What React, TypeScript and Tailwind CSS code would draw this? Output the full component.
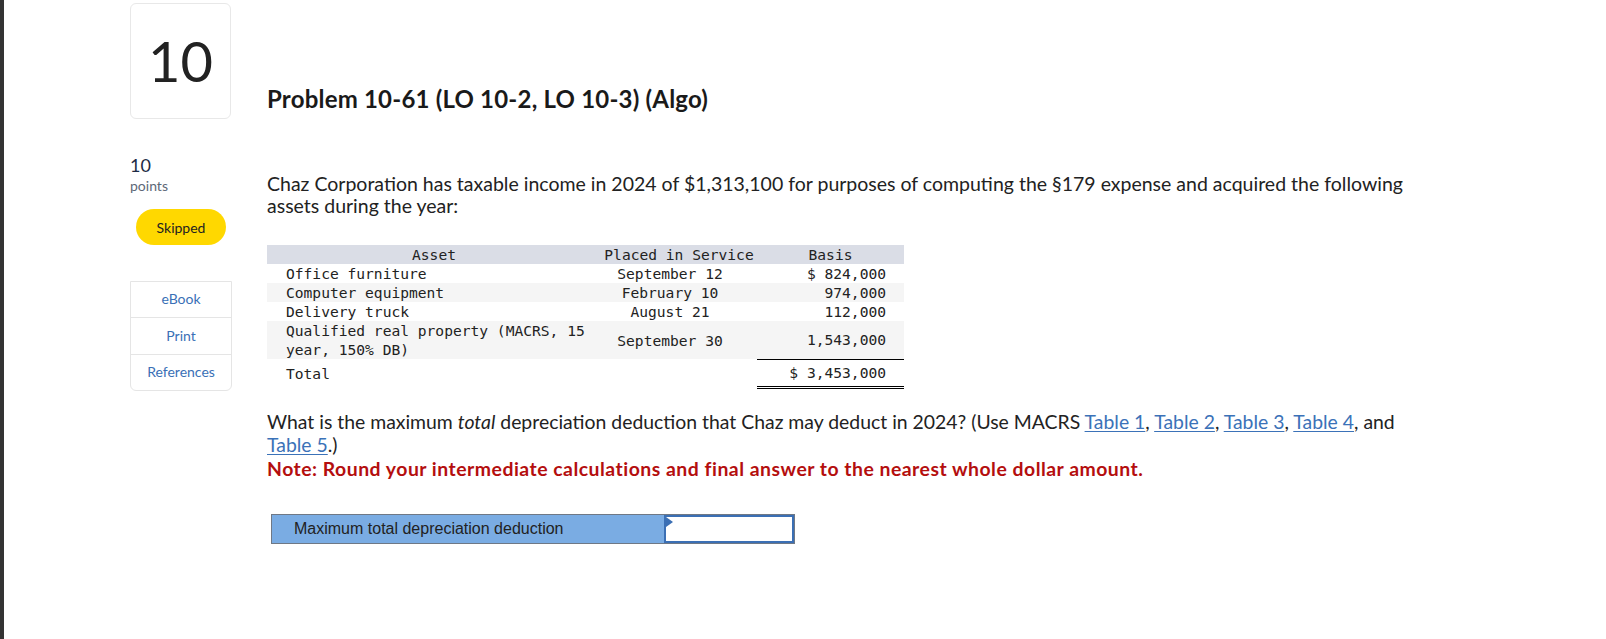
import React from 'react';

type Asset = { name: React.ReactNode; placed: string; basis: string; shaded?: boolean };

const assets: Asset[] = [
  { name: 'Office furniture', placed: 'September 12', basis: '$ 824,000' },
  { name: 'Computer equipment', placed: 'February 10', basis: '974,000', shaded: true },
  { name: 'Delivery truck', placed: 'August 21', basis: '112,000' },
  {
    name: (
      <>
        Qualified real property (MACRS, 15
        <br />
        year, 150% DB)
      </>
    ),
    placed: 'September 30',
    basis: '1,543,000',
    shaded: true,
  },
];

const sans = "font-['Lato','Open_Sans',sans-serif]";
const mono = "font-['DejaVu_Sans_Mono','Liberation_Mono',monospace]";

function Sidebar() {
  return (
    <div className={`w-[102px] shrink-0 ${sans}`}>
      <div className="mt-[3px] flex h-[116px] w-[101px] items-center justify-center rounded-md border border-[#e8e8e8] text-[56px] font-normal leading-none text-[#222]">
        10
      </div>
      <div className="mt-[35px] text-[18px] leading-[22px] text-[#1d2b45]">10</div>
      <div className="text-[14px] leading-[20px] text-[#5d6877]">points</div>
      <div className="ml-[6px] mt-[13px] flex h-[36px] w-[90px] items-center justify-center rounded-full bg-[#ffd800] text-[14px] text-[#222]">
        Skipped
      </div>
      <div className="mt-[36px] flex flex-col rounded-b-md border border-[#e5e5e5] text-[14px] leading-[18px] text-[#3a70b6]">
        <a className="flex h-[36px] items-center justify-center border-b border-[#e5e5e5] pb-[2px]">eBook</a>
        <a className="flex h-[37px] items-center justify-center border-b border-[#e5e5e5]">Print</a>
        <a className="flex h-[35px] items-center justify-center pb-[2px]">References</a>
      </div>
    </div>
  );
}

function AssetTable() {
  return (
    <table className={`mt-[28px] w-[637px] border-collapse text-[14.6px] text-[#222] ${mono}`}>
      <thead>
        <tr className="h-[19px] bg-[#dadde6] leading-[19px]">
          <th className="w-[334px] p-0 text-center font-normal">Asset</th>
          <th className="w-[156px] p-0 text-center font-normal">Placed in Service</th>
          <th className="w-[147px] p-0 text-center font-normal">Basis</th>
        </tr>
      </thead>
      <tbody>
        {assets.map((a, i) => (
          <tr key={i} className={`leading-[19px] ${a.shaded ? 'bg-[#f5f5f5]' : 'bg-white'}`}>
            <td className="p-0 pl-[19px] align-middle">{a.name}</td>
            <td className="p-0 pr-[18px] text-center align-middle">{a.placed}</td>
            <td className="p-0 pr-[18px] text-right align-middle">{a.basis}</td>
          </tr>
        ))}
        <tr className="h-[28px] leading-[19px]">
          <td className="p-0 pl-[19px] pt-px">Total</td>
          <td className="p-0" />
          <td className="border-t border-b-[3px] border-double border-t-black border-b-black p-0 pr-[18px] text-right">
            $ 3,453,000
          </td>
        </tr>
      </tbody>
    </table>
  );
}

const link = 'whitespace-nowrap text-[#3b72b8] underline decoration-1 underline-offset-2';

export default function App() {
  return (
    <div className="flex min-h-screen bg-white">
      <div className="w-[4px] shrink-0 bg-[#333]" />
      <div className="ml-[126px] flex">
        <Sidebar />
        <main className={`ml-[35px] w-[1165px] ${sans} text-[#222]`}>
          <h1 className="pt-[84px] text-[24px] font-bold leading-[30px] tracking-[0.2px] text-[#1a1a1a]">
            Problem 10-61 (LO 10-2, LO 10-3) (Algo)
          </h1>
          <p className="mt-[59px] text-[19.5px] leading-[22px]">
            Chaz Corporation has taxable income in 2024 of $1,313,100 for purposes of computing the §179 expense and
            acquired the following assets during the year:
          </p>
          <AssetTable />
          <div className="mt-[21px] text-[19.4px] leading-[23px]">
            <p>
              What is the maximum <i>total</i> depreciation deduction that Chaz may deduct in 2024? (Use MACRS{' '}
              <a className={link}>Table 1</a>, <a className={link}>Table 2</a>, <a className={link}>Table 3</a>,{' '}
              <a className={link}>Table 4</a>, and <a className={link}>Table 5</a>.)
            </p>
            <p className="mt-px font-bold tracking-[0.5px] text-[#b40e0e]">
              Note: Round your intermediate calculations and final answer to the nearest whole dollar amount.
            </p>
          </div>
          <div className="ml-[4px] mt-[34px] flex h-[30px] w-[524px] border border-[#6f7885] font-['Liberation_Sans',Arial,sans-serif]">
            <div className="flex w-[392px] items-center bg-[#7aace3] pl-[22px] text-[16px] text-[#222]">
              Maximum total depreciation deduction
            </div>
            <div className="relative flex-1 border-2 border-[#3b6fb4] bg-white">
              <span className="absolute left-0 top-0 h-0 w-0 border-y-[5px] border-l-[7px] border-y-transparent border-l-[#3b6fb4]" />
            </div>
          </div>
        </main>
      </div>
    </div>
  );
}
